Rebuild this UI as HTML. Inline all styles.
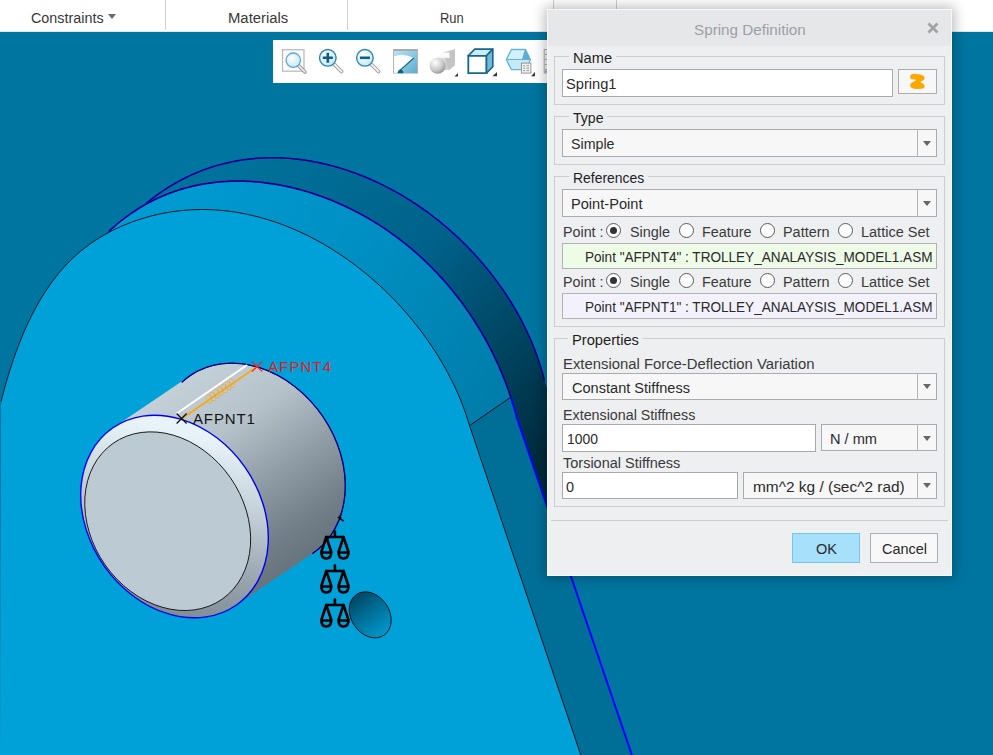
<!DOCTYPE html>
<html><head><meta charset="utf-8"><style>
html,body{margin:0;padding:0;width:993px;height:755px;overflow:hidden;background:#0075a0}
.b{position:absolute}
.t{position:absolute;white-space:nowrap;font-family:"Liberation Sans",sans-serif;transform-origin:0 0}
</style></head><body>
<svg width="993" height="755" viewBox="0 0 993 755" style="position:absolute;left:0;top:0">
<defs>
<linearGradient id="gBack" x1="260" y1="150" x2="560" y2="440" gradientUnits="userSpaceOnUse">
<stop offset="0" stop-color="#00719a"/><stop offset="0.45" stop-color="#00628a"/><stop offset="0.8" stop-color="#00405a"/><stop offset="1" stop-color="#002a3c"/></linearGradient>
<linearGradient id="gSide" x1="150" y1="190" x2="500" y2="420" gradientUnits="userSpaceOnUse">
<stop offset="0" stop-color="#009bd3"/><stop offset="0.5" stop-color="#008fc3"/><stop offset="1" stop-color="#007ca8"/></linearGradient>
<linearGradient id="gBody" x1="190.5" y1="375.4" x2="312.5" y2="553.6" gradientUnits="userSpaceOnUse">
<stop offset="0" stop-color="#c4d0d8"/><stop offset="0.3" stop-color="#b6c2ca"/><stop offset="0.6" stop-color="#909ca5"/><stop offset="0.85" stop-color="#737f88"/><stop offset="1" stop-color="#68747d"/></linearGradient>
<linearGradient id="gRim" x1="200" y1="405" x2="160" y2="625" gradientUnits="userSpaceOnUse"><stop offset="0" stop-color="#eaf6fb"/><stop offset="0.15" stop-color="#e6f2f8"/><stop offset="0.45" stop-color="#c2ced7"/><stop offset="0.75" stop-color="#97a3ac"/><stop offset="1" stop-color="#7c8891"/></linearGradient>
<linearGradient id="gHole" x1="358" y1="598" x2="384" y2="634" gradientUnits="userSpaceOnUse">
<stop offset="0" stop-color="#004c6a"/><stop offset="0.3" stop-color="#00668c"/><stop offset="0.7" stop-color="#0082b0"/><stop offset="1" stop-color="#0095c8"/></linearGradient>
</defs>
<rect width="993" height="755" fill="#0075a0"/>
<path d="M145.9,203.7 L148.1,201.9 L150.3,200.1 L152.6,198.4 L154.8,196.7 L157.0,195.0 L159.3,193.4 L161.6,191.9 L163.8,190.3 L166.1,188.8 L168.4,187.3 L170.7,185.9 L173.0,184.5 L175.3,183.2 L177.7,181.9 L180.0,180.6 L182.3,179.4 L184.7,178.2 L187.1,177.0 L189.4,175.9 L191.8,174.8 L194.2,173.7 L196.6,172.7 L199.0,171.7 L201.4,170.8 L203.8,169.8 L206.2,169.0 L208.7,168.1 L211.1,167.3 L213.5,166.5 L216.0,165.8 L218.4,165.1 L220.9,164.4 L223.3,163.8 L225.8,163.2 L228.3,162.6 L230.7,162.1 L233.2,161.5 L235.7,161.1 L238.2,160.6 L240.7,160.2 L243.1,159.8 L245.6,159.5 L248.1,159.2 L250.6,158.9 L253.1,158.7 L255.6,158.4 L258.1,158.2 L260.7,158.1 L263.2,158.0 L265.7,157.9 L268.2,157.8 L270.7,157.8 L273.2,157.8 L275.7,157.8 L278.2,157.8 L280.7,157.9 L283.3,158.0 L285.8,158.2 L288.3,158.3 L290.8,158.5 L293.3,158.8 L295.8,159.0 L298.3,159.3 L300.8,159.6 L303.3,159.9 L305.8,160.3 L308.3,160.7 L310.8,161.1 L313.3,161.6 L315.8,162.0 L318.3,162.5 L320.8,163.1 L323.3,163.6 L325.8,164.2 L328.2,164.8 L330.7,165.4 L333.2,166.1 L335.6,166.8 L338.1,167.5 L340.5,168.2 L343.0,169.0 L345.4,169.7 L347.9,170.5 L350.3,171.4 L352.7,172.2 L355.1,173.1 L357.5,174.0 L359.9,174.9 L362.3,175.9 L364.7,176.8 L367.1,177.8 L369.5,178.8 L371.9,179.9 L374.2,180.9 L376.6,182.0 L378.9,183.1 L381.2,184.2 L383.6,185.4 L385.9,186.6 L388.2,187.7 L390.5,189.0 L392.8,190.2 L395.1,191.4 L397.3,192.7 L399.6,194.0 L401.8,195.3 L404.1,196.6 L406.3,198.0 L408.5,199.4 L410.7,200.7 L412.9,202.2 L415.1,203.6 L417.3,205.0 L419.4,206.5 L421.6,208.0 L423.7,209.5 L425.9,211.0 L428.0,212.5 L430.1,214.1 L432.2,215.7 L434.2,217.3 L436.3,218.9 L438.4,220.5 L440.4,222.1 L442.4,223.8 L444.4,225.5 L446.4,227.2 L448.4,228.9 L450.4,230.6 L452.3,232.3 L454.3,234.1 L456.2,235.9 L458.1,237.6 L460.0,239.4 L461.9,241.3 L463.8,243.1 L465.6,244.9 L467.5,246.8 L469.3,248.7 L471.1,250.6 L472.9,252.5 L474.7,254.4 L476.4,256.3 L478.2,258.2 L479.9,260.2 L481.6,262.2 L483.3,264.2 L485.0,266.2 L486.7,268.2 L488.3,270.2 L489.9,272.2 L491.5,274.3 L493.1,276.3 L494.7,278.4 L496.3,280.5 L497.8,282.6 L499.3,284.7 L500.8,286.8 L502.3,288.9 L503.8,291.0 L505.2,293.2 L506.6,295.3 L508.0,297.5 L509.4,299.7 L510.8,301.8 L512.1,304.0 L513.5,306.2 L514.8,308.5 L516.1,310.7 L517.3,312.9 L518.6,315.1 L519.8,317.4 L521.0,319.7 L522.2,321.9 L523.3,324.2 L524.5,326.5 L525.6,328.8 L526.7,331.1 L527.8,333.4 L528.8,335.7 L529.9,338.0 L530.9,340.3 L531.9,342.6 L532.8,345.0 L533.8,347.3 L534.7,349.7 L535.6,352.0 L536.4,354.4 L537.3,356.7 L538.1,359.1 L538.9,361.5 L539.7,363.9 L540.4,366.3 L541.2,368.7 L541.9,371.0 L542.6,373.4 L543.2,375.9 L543.8,378.3 L544.4,380.7 L562,430 L580,500 L590,520 L559,540 L516.8,417.6 L516.4,415.9 L515.9,414.1 L515.5,412.4 L515.0,410.7 L514.5,409.0 L514.0,407.3 L513.5,405.6 L512.9,403.9 L512.4,402.2 L511.9,400.5 L511.3,398.8 L510.8,397.1 L510.2,395.4 L509.6,393.7 L509.1,392.0 L508.5,390.4 L507.9,388.7 L507.3,387.0 L506.6,385.3 L506.0,383.7 L505.4,382.0 L504.7,380.3 L504.1,378.7 L503.4,377.0 L502.7,375.4 L502.1,373.7 L501.4,372.1 L500.7,370.4 L500.0,368.8 L499.3,367.2 L498.5,365.5 L497.8,363.9 L497.1,362.3 L496.3,360.7 L495.6,359.1 L494.8,357.5 L494.0,355.9 L493.3,354.3 L492.5,352.7 L491.7,351.1 L490.9,349.5 L490.0,347.9 L489.2,346.3 L488.4,344.7 L487.6,343.2 L486.7,341.6 L485.9,340.0 L485.0,338.5 L484.1,336.9 L483.2,335.4 L482.3,333.9 L481.5,332.3 L480.5,330.8 L479.6,329.3 L478.7,327.7 L477.8,326.2 L476.8,324.7 L475.9,323.2 L474.9,321.7 L474.0,320.2 L473.0,318.7 L472.0,317.2 L471.1,315.7 L470.1,314.2 L469.1,312.8 L468.0,311.3 L467.0,309.9 L466.0,308.4 L465.0,306.9 L463.9,305.5 L462.9,304.1 L461.8,302.6 L460.8,301.2 L459.7,299.8 L458.6,298.4 L457.5,297.0 L456.4,295.6 L455.3,294.2 L454.2,292.8 L453.1,291.4 L452.0,290.0 L450.8,288.6 L449.7,287.3 L448.6,285.9 L447.4,284.5 L446.2,283.2 L445.1,281.9 L443.9,280.5 L442.7,279.2 L441.5,277.9 L440.3,276.6 L439.1,275.2 L437.9,273.9 L436.7,272.6 L435.4,271.4 L434.2,270.1 L433.0,268.8 L431.7,267.5 L430.5,266.3 L429.2,265.0 L427.9,263.8 L426.6,262.5 L425.4,261.3 L424.1,260.1 L422.8,258.9 L421.4,257.6 L420.1,256.4 L418.8,255.2 L417.5,254.0 L416.1,252.9 L414.8,251.7 L413.4,250.5 L412.1,249.4 L410.7,248.2 L409.4,247.1 L408.0,245.9 L406.6,244.8 L405.2,243.7 L403.8,242.6 L402.4,241.5 L401.0,240.4 L399.6,239.3 L398.1,238.2 L396.7,237.1 L395.3,236.1 L393.8,235.0 L392.4,234.0 L390.9,232.9 L389.4,231.9 L388.0,230.9 L386.5,229.8 L385.0,228.8 L383.5,227.8 L382.0,226.9 L380.5,225.9 L379.0,224.9 L377.5,223.9 L375.9,223.0 L374.4,222.0 L372.9,221.1 L371.3,220.2 L369.8,219.3 L368.2,218.3 L366.7,217.4 L365.1,216.6 L363.5,215.7 L362.0,214.8 L360.4,213.9 L358.8,213.1 L357.2,212.2 L355.6,211.4 L354.0,210.6 L352.4,209.8 L350.8,209.0 L349.1,208.2 L347.5,207.4 L345.9,206.6 L344.3,205.9 L342.6,205.1 L341.0,204.4 L339.3,203.6 L337.7,202.9 L336.0,202.2 L334.4,201.5 L332.7,200.8 L331.1,200.1 L329.4,199.4 L327.7,198.8 L326.0,198.1 L324.4,197.5 L322.7,196.9 L321.0,196.3 L319.3,195.7 L317.6,195.1 L315.9,194.5 L314.2,193.9 L312.5,193.4 L310.8,192.8 L309.1,192.3 L307.4,191.7 L305.7,191.2 L303.9,190.7 L302.2,190.2 L300.5,189.8 L298.8,189.3 L297.1,188.9 L295.3,188.4 L293.6,188.0 L291.9,187.6 L290.1,187.2 L288.4,186.8 L286.7,186.4 L284.9,186.0 L283.2,185.7 L281.4,185.3 L279.7,185.0 L278.0,184.7 L276.2,184.4 L274.5,184.1 L272.7,183.8 L271.0,183.6 L269.2,183.3 L267.5,183.1 L265.7,182.8 L264.0,182.6 L262.2,182.4 L260.5,182.2 L258.7,182.1 L257.0,181.9 L255.2,181.8 L253.4,181.6 L251.7,181.5 L249.9,181.4 L248.2,181.3 L246.4,181.3 L244.7,181.2 L242.9,181.1 L241.2,181.1 L239.4,181.1 L237.7,181.1 L235.9,181.1 L234.2,181.1 L232.4,181.2 L230.7,181.2 L228.9,181.3 L227.2,181.4 L225.5,181.5 L223.7,181.6 L222.0,181.7 L220.2,181.8 L218.5,182.0 L216.8,182.2 L215.0,182.4 L213.3,182.6 L211.6,182.8 L209.8,183.0 L208.1,183.3 L206.4,183.5 L204.7,183.8 L203.0,184.1 L201.2,184.4 L199.5,184.7 L197.8,185.1 L196.1,185.4 L194.4,185.8 L192.7,186.2 L191.0,186.6 L189.3,187.0 L187.6,187.5 L185.9,187.9 L184.2,188.4 L182.5,188.9 L180.9,189.4 L179.2,189.9 L177.5,190.5 L175.8,191.0 L174.2,191.6 L172.5,192.2 L170.9,192.8 L169.2,193.4 L167.5,194.0 L165.9,194.7 L164.3,195.4 L162.6,196.0 L161.0,196.8 L159.4,197.5 L157.7,198.2 L156.1,199.0 L154.5,199.8 L152.9,200.6 L151.3,201.4 L149.7,202.2 L148.1,203.0 L146.5,203.9 L144.9,204.8 L143.4,205.7 L141.8,206.6 L140.2,207.6 L138.7,208.5 L137.1,209.5 L135.6,210.5 L134.0,211.5 L132.5,212.5 L130.9,213.6 L129.4,214.6 L127.9,215.7 L126.4,216.8 L124.9,217.9 L123.4,219.1 L121.9,220.2 L120.4,221.4 L118.9,222.6 L117.4,223.8 L116.0,225.1 L114.5,226.3 L113.1,227.6 L111.6,228.9 L110.2,230.2 L108.8,231.6 Z" fill="url(#gBack)"/>
<path d="M108.8,231.6 L110.2,230.2 L111.6,228.9 L113.1,227.6 L114.5,226.3 L116.0,225.1 L117.4,223.8 L118.9,222.6 L120.4,221.4 L121.9,220.2 L123.4,219.1 L124.9,217.9 L126.4,216.8 L127.9,215.7 L129.4,214.6 L130.9,213.6 L132.5,212.5 L134.0,211.5 L135.6,210.5 L137.1,209.5 L138.7,208.5 L140.2,207.6 L141.8,206.6 L143.4,205.7 L144.9,204.8 L146.5,203.9 L148.1,203.0 L149.7,202.2 L151.3,201.4 L152.9,200.6 L154.5,199.8 L156.1,199.0 L157.7,198.2 L159.4,197.5 L161.0,196.8 L162.6,196.0 L164.3,195.4 L165.9,194.7 L167.5,194.0 L169.2,193.4 L170.9,192.8 L172.5,192.2 L174.2,191.6 L175.8,191.0 L177.5,190.5 L179.2,189.9 L180.9,189.4 L182.5,188.9 L184.2,188.4 L185.9,187.9 L187.6,187.5 L189.3,187.0 L191.0,186.6 L192.7,186.2 L194.4,185.8 L196.1,185.4 L197.8,185.1 L199.5,184.7 L201.2,184.4 L203.0,184.1 L204.7,183.8 L206.4,183.5 L208.1,183.3 L209.8,183.0 L211.6,182.8 L213.3,182.6 L215.0,182.4 L216.8,182.2 L218.5,182.0 L220.2,181.8 L222.0,181.7 L223.7,181.6 L225.5,181.5 L227.2,181.4 L228.9,181.3 L230.7,181.2 L232.4,181.2 L234.2,181.1 L235.9,181.1 L237.7,181.1 L239.4,181.1 L241.2,181.1 L242.9,181.1 L244.7,181.2 L246.4,181.3 L248.2,181.3 L249.9,181.4 L251.7,181.5 L253.4,181.6 L255.2,181.8 L257.0,181.9 L258.7,182.1 L260.5,182.2 L262.2,182.4 L264.0,182.6 L265.7,182.8 L267.5,183.1 L269.2,183.3 L271.0,183.6 L272.7,183.8 L274.5,184.1 L276.2,184.4 L278.0,184.7 L279.7,185.0 L281.4,185.3 L283.2,185.7 L284.9,186.0 L286.7,186.4 L288.4,186.8 L290.1,187.2 L291.9,187.6 L293.6,188.0 L295.3,188.4 L297.1,188.9 L298.8,189.3 L300.5,189.8 L302.2,190.2 L303.9,190.7 L305.7,191.2 L307.4,191.7 L309.1,192.3 L310.8,192.8 L312.5,193.4 L314.2,193.9 L315.9,194.5 L317.6,195.1 L319.3,195.7 L321.0,196.3 L322.7,196.9 L324.4,197.5 L326.0,198.1 L327.7,198.8 L329.4,199.4 L331.1,200.1 L332.7,200.8 L334.4,201.5 L336.0,202.2 L337.7,202.9 L339.3,203.6 L341.0,204.4 L342.6,205.1 L344.3,205.9 L345.9,206.6 L347.5,207.4 L349.1,208.2 L350.8,209.0 L352.4,209.8 L354.0,210.6 L355.6,211.4 L357.2,212.2 L358.8,213.1 L360.4,213.9 L362.0,214.8 L363.5,215.7 L365.1,216.6 L366.7,217.4 L368.2,218.3 L369.8,219.3 L371.3,220.2 L372.9,221.1 L374.4,222.0 L375.9,223.0 L377.5,223.9 L379.0,224.9 L380.5,225.9 L382.0,226.9 L383.5,227.8 L385.0,228.8 L386.5,229.8 L388.0,230.9 L389.4,231.9 L390.9,232.9 L392.4,234.0 L393.8,235.0 L395.3,236.1 L396.7,237.1 L398.1,238.2 L399.6,239.3 L401.0,240.4 L402.4,241.5 L403.8,242.6 L405.2,243.7 L406.6,244.8 L408.0,245.9 L409.4,247.1 L410.7,248.2 L412.1,249.4 L413.4,250.5 L414.8,251.7 L416.1,252.9 L417.5,254.0 L418.8,255.2 L420.1,256.4 L421.4,257.6 L422.8,258.9 L424.1,260.1 L425.4,261.3 L426.6,262.5 L427.9,263.8 L429.2,265.0 L430.5,266.3 L431.7,267.5 L433.0,268.8 L434.2,270.1 L435.4,271.4 L436.7,272.6 L437.9,273.9 L439.1,275.2 L440.3,276.6 L441.5,277.9 L442.7,279.2 L443.9,280.5 L445.1,281.9 L446.2,283.2 L447.4,284.5 L448.6,285.9 L449.7,287.3 L450.8,288.6 L452.0,290.0 L453.1,291.4 L454.2,292.8 L455.3,294.2 L456.4,295.6 L457.5,297.0 L458.6,298.4 L459.7,299.8 L460.8,301.2 L461.8,302.6 L462.9,304.1 L463.9,305.5 L465.0,306.9 L466.0,308.4 L467.0,309.9 L468.0,311.3 L469.1,312.8 L470.1,314.2 L471.1,315.7 L472.0,317.2 L473.0,318.7 L474.0,320.2 L474.9,321.7 L475.9,323.2 L476.8,324.7 L477.8,326.2 L478.7,327.7 L479.6,329.3 L480.5,330.8 L481.5,332.3 L482.3,333.9 L483.2,335.4 L484.1,336.9 L485.0,338.5 L485.9,340.0 L486.7,341.6 L487.6,343.2 L488.4,344.7 L489.2,346.3 L490.0,347.9 L490.9,349.5 L491.7,351.1 L492.5,352.7 L493.3,354.3 L494.0,355.9 L494.8,357.5 L495.6,359.1 L496.3,360.7 L497.1,362.3 L497.8,363.9 L498.5,365.5 L499.3,367.2 L500.0,368.8 L500.7,370.4 L501.4,372.1 L502.1,373.7 L502.7,375.4 L503.4,377.0 L504.1,378.7 L504.7,380.3 L505.4,382.0 L506.0,383.7 L506.6,385.3 L507.3,387.0 L507.9,388.7 L508.5,390.4 L509.1,392.0 L509.6,393.7 L510.2,395.4 L510.8,397.1 L511.3,398.8 L511.9,400.5 L512.4,402.2 L512.9,403.9 L513.5,405.6 L514.0,407.3 L514.5,409.0 L515.0,410.7 L515.5,412.4 L515.9,414.1 L516.4,415.9 L516.8,417.6 L631.9,755.0 L580.8,755.0 L469.1,424.2 L468.5,422.2 L467.9,420.2 L467.2,418.2 L466.6,416.1 L465.9,414.1 L465.2,412.1 L464.5,410.1 L463.7,408.1 L463.0,406.1 L462.2,404.1 L461.4,402.1 L460.6,400.1 L459.8,398.1 L458.9,396.1 L458.1,394.1 L457.2,392.1 L456.3,390.2 L455.4,388.2 L454.5,386.2 L453.6,384.2 L452.6,382.3 L451.6,380.3 L450.6,378.4 L449.6,376.4 L448.6,374.4 L447.6,372.5 L446.5,370.6 L445.5,368.6 L444.4,366.7 L443.3,364.8 L442.2,362.8 L441.0,360.9 L439.9,359.0 L438.7,357.1 L437.6,355.2 L436.4,353.3 L435.2,351.4 L434.0,349.6 L432.7,347.7 L431.5,345.8 L430.2,344.0 L428.9,342.1 L427.7,340.3 L426.4,338.4 L425.0,336.6 L423.7,334.8 L422.4,332.9 L421.0,331.1 L419.6,329.3 L418.3,327.5 L416.9,325.7 L415.5,324.0 L414.0,322.2 L412.6,320.4 L411.2,318.7 L409.7,316.9 L408.2,315.2 L406.7,313.5 L405.3,311.7 L403.7,310.0 L402.2,308.3 L400.7,306.6 L399.1,305.0 L397.6,303.3 L396.0,301.6 L394.4,300.0 L392.9,298.3 L391.2,296.7 L389.6,295.1 L388.0,293.5 L386.4,291.9 L384.7,290.3 L383.1,288.7 L381.4,287.2 L379.7,285.6 L378.0,284.1 L376.3,282.5 L374.6,281.0 L372.9,279.5 L371.2,278.0 L369.4,276.5 L367.7,275.1 L365.9,273.6 L364.2,272.2 L362.4,270.7 L360.6,269.3 L358.8,267.9 L357.0,266.5 L355.2,265.1 L353.3,263.8 L351.5,262.4 L349.7,261.1 L347.8,259.7 L346.0,258.4 L344.1,257.1 L342.2,255.8 L340.3,254.6 L338.4,253.3 L336.5,252.1 L334.6,250.8 L332.7,249.6 L330.8,248.4 L328.8,247.3 L326.9,246.1 L324.9,244.9 L323.0,243.8 L321.0,242.7 L319.0,241.6 L317.1,240.5 L315.1,239.4 L313.1,238.4 L311.1,237.3 L309.1,236.3 L307.1,235.3 L305.1,234.3 L303.0,233.4 L301.0,232.4 L299.0,231.5 L296.9,230.6 L294.9,229.7 L292.8,228.8 L290.7,227.9 L288.7,227.1 L286.6,226.2 L284.5,225.4 L282.4,224.6 L280.4,223.9 L278.3,223.1 L276.2,222.4 L274.1,221.7 L271.9,221.0 L269.8,220.3 L267.7,219.6 L265.6,219.0 L263.5,218.4 L261.3,217.8 L259.2,217.2 L257.1,216.6 L254.9,216.1 L252.8,215.6 L250.6,215.1 L248.5,214.6 L246.3,214.1 L244.1,213.7 L242.0,213.3 L239.8,212.9 L237.6,212.5 L235.5,212.1 L233.3,211.8 L231.1,211.5 L228.9,211.2 L226.7,210.9 L224.5,210.7 L222.3,210.5 L220.1,210.3 L218.0,210.1 L215.8,210.0 L213.6,209.8 L211.3,209.7 L209.1,209.6 L206.9,209.6 L204.7,209.5 L202.5,209.5 L200.3,209.5 L198.1,209.6 L195.9,209.6 L193.7,209.7 L191.5,209.8 L189.2,209.9 L187.0,210.1 L184.8,210.3 L182.6,210.5 L180.4,210.7 L178.2,211.0 L175.9,211.2 L173.7,211.5 L171.5,211.8 L169.3,212.2 L167.1,212.6 L164.9,213.0 L162.7,213.4 L160.5,213.8 L158.3,214.3 L156.2,214.8 L154.0,215.3 L151.8,215.8 L149.6,216.4 L147.5,217.0 L145.3,217.6 L143.2,218.3 L141.1,218.9 L138.9,219.6 L136.8,220.3 L134.7,221.0 L132.6,221.8 L130.5,222.6 L128.4,223.4 L126.3,224.2 L124.3,225.1 L122.2,225.9 L120.2,226.8 L118.1,227.8 L116.1,228.7 L114.1,229.7 L112.1,230.7 L110.2,231.7 L108.2,232.8 L106.2,233.8 L104.3,234.9 L102.4,236.0 L100.5,237.2 L98.6,238.3 L96.7,239.5 L94.8,240.7 L93.0,242.0 L91.2,243.2 L89.4,244.5 L87.6,245.8 L85.8,247.2 L84.0,248.5 L82.3,249.9 L80.6,251.3 L78.9,252.7 L77.2,254.2 L75.6,255.6 L73.9,257.1 L72.3,258.7 L70.7,260.2 L69.1,261.8 L67.6,263.4 L66.0,265.0 L64.5,266.6 L63.0,268.3 L61.6,269.9 L60.1,271.6 L58.7,273.3 L57.3,275.1 L55.9,276.8 L54.5,278.6 L53.2,280.4 L51.8,282.2 L50.5,284.0 L49.2,285.9 L47.9,287.7 L46.7,289.6 L45.4,291.5 L44.2,293.4 L43.0,295.3 L41.8,297.2 L40.6,299.2 L39.5,301.1 L38.3,303.1 L37.2,305.1 L36.1,307.1 L35.0,309.1 L33.9,311.1 L32.9,313.1 L31.8,315.2 L30.8,317.2 L29.8,319.3 L28.8,321.3 L27.8,323.4 L26.9,325.5 L25.9,327.6 L25.0,329.6 L24.1,331.7 L23.2,333.8 L22.3,336.0 L21.4,338.1 L20.6,340.2 L19.7,342.3 L18.9,344.4 L18.1,346.6 L17.3,348.7 L16.5,350.8 L15.7,353.0 L14.9,355.1 L14.2,357.2 L13.4,359.4 L12.7,361.5 L12.0,363.7 L11.3,365.8 L10.6,367.9 L9.9,370.1 L9.3,372.2 L8.6,374.3 L8.0,376.4 L7.3,378.6 L6.7,380.7 L6.1,382.8 L5.5,384.9 L4.9,387.0 L4.3,389.1 L3.8,391.2 L3.2,393.3 L2.7,395.3 L2.1,397.4 L1.6,399.5 L1.1,401.5 Z" fill="url(#gSide)"/>
<path d="M470.5,425 L510.6,397.6 L510.8,397.1 L511.3,398.8 L511.9,400.5 L512.4,402.2 L512.9,403.9 L513.5,405.6 L514.0,407.3 L514.5,409.0 L515.0,410.7 L515.5,412.4 L515.9,414.1 L516.4,415.9 L516.8,417.6 L631.9,755.0 L580.8,755 Z" fill="#006f98"/>
<path d="M1.1,401.5 L1.6,399.5 L2.1,397.4 L2.7,395.3 L3.2,393.3 L3.8,391.2 L4.3,389.1 L4.9,387.0 L5.5,384.9 L6.1,382.8 L6.7,380.7 L7.3,378.6 L8.0,376.4 L8.6,374.3 L9.3,372.2 L9.9,370.1 L10.6,367.9 L11.3,365.8 L12.0,363.7 L12.7,361.5 L13.4,359.4 L14.2,357.2 L14.9,355.1 L15.7,353.0 L16.5,350.8 L17.3,348.7 L18.1,346.6 L18.9,344.4 L19.7,342.3 L20.6,340.2 L21.4,338.1 L22.3,336.0 L23.2,333.8 L24.1,331.7 L25.0,329.6 L25.9,327.6 L26.9,325.5 L27.8,323.4 L28.8,321.3 L29.8,319.3 L30.8,317.2 L31.8,315.2 L32.9,313.1 L33.9,311.1 L35.0,309.1 L36.1,307.1 L37.2,305.1 L38.3,303.1 L39.5,301.1 L40.6,299.2 L41.8,297.2 L43.0,295.3 L44.2,293.4 L45.4,291.5 L46.7,289.6 L47.9,287.7 L49.2,285.9 L50.5,284.0 L51.8,282.2 L53.2,280.4 L54.5,278.6 L55.9,276.8 L57.3,275.1 L58.7,273.3 L60.1,271.6 L61.6,269.9 L63.0,268.3 L64.5,266.6 L66.0,265.0 L67.6,263.4 L69.1,261.8 L70.7,260.2 L72.3,258.7 L73.9,257.1 L75.6,255.6 L77.2,254.2 L78.9,252.7 L80.6,251.3 L82.3,249.9 L84.0,248.5 L85.8,247.2 L87.6,245.8 L89.4,244.5 L91.2,243.2 L93.0,242.0 L94.8,240.7 L96.7,239.5 L98.6,238.3 L100.5,237.2 L102.4,236.0 L104.3,234.9 L106.2,233.8 L108.2,232.8 L110.2,231.7 L112.1,230.7 L114.1,229.7 L116.1,228.7 L118.1,227.8 L120.2,226.8 L122.2,225.9 L124.3,225.1 L126.3,224.2 L128.4,223.4 L130.5,222.6 L132.6,221.8 L134.7,221.0 L136.8,220.3 L138.9,219.6 L141.1,218.9 L143.2,218.3 L145.3,217.6 L147.5,217.0 L149.6,216.4 L151.8,215.8 L154.0,215.3 L156.2,214.8 L158.3,214.3 L160.5,213.8 L162.7,213.4 L164.9,213.0 L167.1,212.6 L169.3,212.2 L171.5,211.8 L173.7,211.5 L175.9,211.2 L178.2,211.0 L180.4,210.7 L182.6,210.5 L184.8,210.3 L187.0,210.1 L189.2,209.9 L191.5,209.8 L193.7,209.7 L195.9,209.6 L198.1,209.6 L200.3,209.5 L202.5,209.5 L204.7,209.5 L206.9,209.6 L209.1,209.6 L211.3,209.7 L213.6,209.8 L215.8,210.0 L218.0,210.1 L220.1,210.3 L222.3,210.5 L224.5,210.7 L226.7,210.9 L228.9,211.2 L231.1,211.5 L233.3,211.8 L235.5,212.1 L237.6,212.5 L239.8,212.9 L242.0,213.3 L244.1,213.7 L246.3,214.1 L248.5,214.6 L250.6,215.1 L252.8,215.6 L254.9,216.1 L257.1,216.6 L259.2,217.2 L261.3,217.8 L263.5,218.4 L265.6,219.0 L267.7,219.6 L269.8,220.3 L271.9,221.0 L274.1,221.7 L276.2,222.4 L278.3,223.1 L280.4,223.9 L282.4,224.6 L284.5,225.4 L286.6,226.2 L288.7,227.1 L290.7,227.9 L292.8,228.8 L294.9,229.7 L296.9,230.6 L299.0,231.5 L301.0,232.4 L303.0,233.4 L305.1,234.3 L307.1,235.3 L309.1,236.3 L311.1,237.3 L313.1,238.4 L315.1,239.4 L317.1,240.5 L319.0,241.6 L321.0,242.7 L323.0,243.8 L324.9,244.9 L326.9,246.1 L328.8,247.3 L330.8,248.4 L332.7,249.6 L334.6,250.8 L336.5,252.1 L338.4,253.3 L340.3,254.6 L342.2,255.8 L344.1,257.1 L346.0,258.4 L347.8,259.7 L349.7,261.1 L351.5,262.4 L353.3,263.8 L355.2,265.1 L357.0,266.5 L358.8,267.9 L360.6,269.3 L362.4,270.7 L364.2,272.2 L365.9,273.6 L367.7,275.1 L369.4,276.5 L371.2,278.0 L372.9,279.5 L374.6,281.0 L376.3,282.5 L378.0,284.1 L379.7,285.6 L381.4,287.2 L383.1,288.7 L384.7,290.3 L386.4,291.9 L388.0,293.5 L389.6,295.1 L391.2,296.7 L392.9,298.3 L394.4,300.0 L396.0,301.6 L397.6,303.3 L399.1,305.0 L400.7,306.6 L402.2,308.3 L403.7,310.0 L405.3,311.7 L406.7,313.5 L408.2,315.2 L409.7,316.9 L411.2,318.7 L412.6,320.4 L414.0,322.2 L415.5,324.0 L416.9,325.7 L418.3,327.5 L419.6,329.3 L421.0,331.1 L422.4,332.9 L423.7,334.8 L425.0,336.6 L426.4,338.4 L427.7,340.3 L428.9,342.1 L430.2,344.0 L431.5,345.8 L432.7,347.7 L434.0,349.6 L435.2,351.4 L436.4,353.3 L437.6,355.2 L438.7,357.1 L439.9,359.0 L441.0,360.9 L442.2,362.8 L443.3,364.8 L444.4,366.7 L445.5,368.6 L446.5,370.6 L447.6,372.5 L448.6,374.4 L449.6,376.4 L450.6,378.4 L451.6,380.3 L452.6,382.3 L453.6,384.2 L454.5,386.2 L455.4,388.2 L456.3,390.2 L457.2,392.1 L458.1,394.1 L458.9,396.1 L459.8,398.1 L460.6,400.1 L461.4,402.1 L462.2,404.1 L463.0,406.1 L463.7,408.1 L464.5,410.1 L465.2,412.1 L465.9,414.1 L466.6,416.1 L467.2,418.2 L467.9,420.2 L468.5,422.2 L469.1,424.2 L580.8,755.0 L0,755 Z" fill="#00a0d8"/>
<path d="M145.9,203.7 L148.1,201.9 L150.3,200.1 L152.6,198.4 L154.8,196.7 L157.0,195.0 L159.3,193.4 L161.6,191.9 L163.8,190.3 L166.1,188.8 L168.4,187.3 L170.7,185.9 L173.0,184.5 L175.3,183.2 L177.7,181.9 L180.0,180.6 L182.3,179.4 L184.7,178.2 L187.1,177.0 L189.4,175.9 L191.8,174.8 L194.2,173.7 L196.6,172.7 L199.0,171.7 L201.4,170.8 L203.8,169.8 L206.2,169.0 L208.7,168.1 L211.1,167.3 L213.5,166.5 L216.0,165.8 L218.4,165.1 L220.9,164.4 L223.3,163.8 L225.8,163.2 L228.3,162.6 L230.7,162.1 L233.2,161.5 L235.7,161.1 L238.2,160.6 L240.7,160.2 L243.1,159.8 L245.6,159.5 L248.1,159.2 L250.6,158.9 L253.1,158.7 L255.6,158.4 L258.1,158.2 L260.7,158.1 L263.2,158.0 L265.7,157.9 L268.2,157.8 L270.7,157.8 L273.2,157.8 L275.7,157.8 L278.2,157.8 L280.7,157.9 L283.3,158.0 L285.8,158.2 L288.3,158.3 L290.8,158.5 L293.3,158.8 L295.8,159.0 L298.3,159.3 L300.8,159.6 L303.3,159.9 L305.8,160.3 L308.3,160.7 L310.8,161.1 L313.3,161.6 L315.8,162.0 L318.3,162.5 L320.8,163.1 L323.3,163.6 L325.8,164.2 L328.2,164.8 L330.7,165.4 L333.2,166.1 L335.6,166.8 L338.1,167.5 L340.5,168.2 L343.0,169.0 L345.4,169.7 L347.9,170.5 L350.3,171.4 L352.7,172.2 L355.1,173.1 L357.5,174.0 L359.9,174.9 L362.3,175.9 L364.7,176.8 L367.1,177.8 L369.5,178.8 L371.9,179.9 L374.2,180.9 L376.6,182.0 L378.9,183.1 L381.2,184.2 L383.6,185.4 L385.9,186.6 L388.2,187.7 L390.5,189.0 L392.8,190.2 L395.1,191.4 L397.3,192.7 L399.6,194.0 L401.8,195.3 L404.1,196.6 L406.3,198.0 L408.5,199.4 L410.7,200.7 L412.9,202.2 L415.1,203.6 L417.3,205.0 L419.4,206.5 L421.6,208.0 L423.7,209.5 L425.9,211.0 L428.0,212.5 L430.1,214.1 L432.2,215.7 L434.2,217.3 L436.3,218.9 L438.4,220.5 L440.4,222.1 L442.4,223.8 L444.4,225.5 L446.4,227.2 L448.4,228.9 L450.4,230.6 L452.3,232.3 L454.3,234.1 L456.2,235.9 L458.1,237.6 L460.0,239.4 L461.9,241.3 L463.8,243.1 L465.6,244.9 L467.5,246.8 L469.3,248.7 L471.1,250.6 L472.9,252.5 L474.7,254.4 L476.4,256.3 L478.2,258.2 L479.9,260.2 L481.6,262.2 L483.3,264.2 L485.0,266.2 L486.7,268.2 L488.3,270.2 L489.9,272.2 L491.5,274.3 L493.1,276.3 L494.7,278.4 L496.3,280.5 L497.8,282.6 L499.3,284.7 L500.8,286.8 L502.3,288.9 L503.8,291.0 L505.2,293.2 L506.6,295.3 L508.0,297.5 L509.4,299.7 L510.8,301.8 L512.1,304.0 L513.5,306.2 L514.8,308.5 L516.1,310.7 L517.3,312.9 L518.6,315.1 L519.8,317.4 L521.0,319.7 L522.2,321.9 L523.3,324.2 L524.5,326.5 L525.6,328.8 L526.7,331.1 L527.8,333.4 L528.8,335.7 L529.9,338.0 L530.9,340.3 L531.9,342.6 L532.8,345.0 L533.8,347.3 L534.7,349.7 L535.6,352.0 L536.4,354.4 L537.3,356.7 L538.1,359.1 L538.9,361.5 L539.7,363.9 L540.4,366.3 L541.2,368.7 L541.9,371.0 L542.6,373.4 L543.2,375.9 L543.8,378.3 L544.4,380.7" fill="none" stroke="#0000e8" stroke-width="1.6"/>
<path d="M145.9,203.7 L148.1,201.9 L150.3,200.1 L152.6,198.4 L154.8,196.7 L157.0,195.0 L159.3,193.4 L161.6,191.9 L163.8,190.3 L166.1,188.8 L168.4,187.3 L170.7,185.9 L173.0,184.5 L175.3,183.2 L177.7,181.9 L180.0,180.6 L182.3,179.4 L184.7,178.2 L187.1,177.0 L189.4,175.9 L191.8,174.8 L194.2,173.7 L196.6,172.7 L199.0,171.7 L201.4,170.8 L203.8,169.8 L206.2,169.0 L208.7,168.1 L211.1,167.3 L213.5,166.5 L216.0,165.8 L218.4,165.1 L220.9,164.4 L223.3,163.8 L225.8,163.2 L228.3,162.6 L230.7,162.1 L233.2,161.5 L235.7,161.1 L238.2,160.6 L240.7,160.2 L243.1,159.8 L245.6,159.5 L248.1,159.2 L250.6,158.9 L253.1,158.7 L255.6,158.4 L258.1,158.2 L260.7,158.1 L263.2,158.0 L265.7,157.9 L268.2,157.8 L270.7,157.8 L273.2,157.8 L275.7,157.8 L278.2,157.8 L280.7,157.9 L283.3,158.0 L285.8,158.2 L288.3,158.3 L290.8,158.5 L293.3,158.8 L295.8,159.0 L298.3,159.3 L300.8,159.6 L303.3,159.9 L305.8,160.3 L308.3,160.7 L310.8,161.1 L313.3,161.6 L315.8,162.0 L318.3,162.5 L320.8,163.1 L323.3,163.6 L325.8,164.2 L328.2,164.8 L330.7,165.4 L333.2,166.1 L335.6,166.8 L338.1,167.5 L340.5,168.2 L343.0,169.0 L345.4,169.7 L347.9,170.5 L350.3,171.4 L352.7,172.2 L355.1,173.1 L357.5,174.0 L359.9,174.9 L362.3,175.9 L364.7,176.8 L367.1,177.8 L369.5,178.8 L371.9,179.9 L374.2,180.9 L376.6,182.0 L378.9,183.1 L381.2,184.2 L383.6,185.4 L385.9,186.6 L388.2,187.7 L390.5,189.0 L392.8,190.2 L395.1,191.4 L397.3,192.7 L399.6,194.0 L401.8,195.3 L404.1,196.6 L406.3,198.0 L408.5,199.4 L410.7,200.7 L412.9,202.2 L415.1,203.6 L417.3,205.0 L419.4,206.5 L421.6,208.0 L423.7,209.5 L425.9,211.0 L428.0,212.5 L430.1,214.1 L432.2,215.7 L434.2,217.3 L436.3,218.9 L438.4,220.5 L440.4,222.1 L442.4,223.8 L444.4,225.5 L446.4,227.2 L448.4,228.9 L450.4,230.6 L452.3,232.3 L454.3,234.1 L456.2,235.9 L458.1,237.6 L460.0,239.4 L461.9,241.3 L463.8,243.1 L465.6,244.9 L467.5,246.8 L469.3,248.7 L471.1,250.6 L472.9,252.5 L474.7,254.4 L476.4,256.3 L478.2,258.2 L479.9,260.2 L481.6,262.2 L483.3,264.2 L485.0,266.2 L486.7,268.2 L488.3,270.2 L489.9,272.2 L491.5,274.3 L493.1,276.3 L494.7,278.4 L496.3,280.5 L497.8,282.6 L499.3,284.7 L500.8,286.8 L502.3,288.9 L503.8,291.0 L505.2,293.2 L506.6,295.3 L508.0,297.5 L509.4,299.7 L510.8,301.8 L512.1,304.0 L513.5,306.2 L514.8,308.5 L516.1,310.7 L517.3,312.9 L518.6,315.1 L519.8,317.4 L521.0,319.7 L522.2,321.9 L523.3,324.2 L524.5,326.5 L525.6,328.8 L526.7,331.1 L527.8,333.4 L528.8,335.7 L529.9,338.0 L530.9,340.3 L531.9,342.6 L532.8,345.0 L533.8,347.3 L534.7,349.7 L535.6,352.0 L536.4,354.4 L537.3,356.7 L538.1,359.1 L538.9,361.5 L539.7,363.9 L540.4,366.3 L541.2,368.7 L541.9,371.0 L542.6,373.4 L543.2,375.9 L543.8,378.3 L544.4,380.7" fill="none" stroke="#000018" stroke-width="0.7"/>
<path d="M108.8,231.6 L110.2,230.2 L111.6,228.9 L113.1,227.6 L114.5,226.3 L116.0,225.1 L117.4,223.8 L118.9,222.6 L120.4,221.4 L121.9,220.2 L123.4,219.1 L124.9,217.9 L126.4,216.8 L127.9,215.7 L129.4,214.6 L130.9,213.6 L132.5,212.5 L134.0,211.5 L135.6,210.5 L137.1,209.5 L138.7,208.5 L140.2,207.6 L141.8,206.6 L143.4,205.7 L144.9,204.8 L146.5,203.9 L148.1,203.0 L149.7,202.2 L151.3,201.4 L152.9,200.6 L154.5,199.8 L156.1,199.0 L157.7,198.2 L159.4,197.5 L161.0,196.8 L162.6,196.0 L164.3,195.4 L165.9,194.7 L167.5,194.0 L169.2,193.4 L170.9,192.8 L172.5,192.2 L174.2,191.6 L175.8,191.0 L177.5,190.5 L179.2,189.9 L180.9,189.4 L182.5,188.9 L184.2,188.4 L185.9,187.9 L187.6,187.5 L189.3,187.0 L191.0,186.6 L192.7,186.2 L194.4,185.8 L196.1,185.4 L197.8,185.1 L199.5,184.7 L201.2,184.4 L203.0,184.1 L204.7,183.8 L206.4,183.5 L208.1,183.3 L209.8,183.0 L211.6,182.8 L213.3,182.6 L215.0,182.4 L216.8,182.2 L218.5,182.0 L220.2,181.8 L222.0,181.7 L223.7,181.6 L225.5,181.5 L227.2,181.4 L228.9,181.3 L230.7,181.2 L232.4,181.2 L234.2,181.1 L235.9,181.1 L237.7,181.1 L239.4,181.1 L241.2,181.1 L242.9,181.1 L244.7,181.2 L246.4,181.3 L248.2,181.3 L249.9,181.4 L251.7,181.5 L253.4,181.6 L255.2,181.8 L257.0,181.9 L258.7,182.1 L260.5,182.2 L262.2,182.4 L264.0,182.6 L265.7,182.8 L267.5,183.1 L269.2,183.3 L271.0,183.6 L272.7,183.8 L274.5,184.1 L276.2,184.4 L278.0,184.7 L279.7,185.0 L281.4,185.3 L283.2,185.7 L284.9,186.0 L286.7,186.4 L288.4,186.8 L290.1,187.2 L291.9,187.6 L293.6,188.0 L295.3,188.4 L297.1,188.9 L298.8,189.3 L300.5,189.8 L302.2,190.2 L303.9,190.7 L305.7,191.2 L307.4,191.7 L309.1,192.3 L310.8,192.8 L312.5,193.4 L314.2,193.9 L315.9,194.5 L317.6,195.1 L319.3,195.7 L321.0,196.3 L322.7,196.9 L324.4,197.5 L326.0,198.1 L327.7,198.8 L329.4,199.4 L331.1,200.1 L332.7,200.8 L334.4,201.5 L336.0,202.2 L337.7,202.9 L339.3,203.6 L341.0,204.4 L342.6,205.1 L344.3,205.9 L345.9,206.6 L347.5,207.4 L349.1,208.2 L350.8,209.0 L352.4,209.8 L354.0,210.6 L355.6,211.4 L357.2,212.2 L358.8,213.1 L360.4,213.9 L362.0,214.8 L363.5,215.7 L365.1,216.6 L366.7,217.4 L368.2,218.3 L369.8,219.3 L371.3,220.2 L372.9,221.1 L374.4,222.0 L375.9,223.0 L377.5,223.9 L379.0,224.9 L380.5,225.9 L382.0,226.9 L383.5,227.8 L385.0,228.8 L386.5,229.8 L388.0,230.9 L389.4,231.9 L390.9,232.9 L392.4,234.0 L393.8,235.0 L395.3,236.1 L396.7,237.1 L398.1,238.2 L399.6,239.3 L401.0,240.4 L402.4,241.5 L403.8,242.6 L405.2,243.7 L406.6,244.8 L408.0,245.9 L409.4,247.1 L410.7,248.2 L412.1,249.4 L413.4,250.5 L414.8,251.7 L416.1,252.9 L417.5,254.0 L418.8,255.2 L420.1,256.4 L421.4,257.6 L422.8,258.9 L424.1,260.1 L425.4,261.3 L426.6,262.5 L427.9,263.8 L429.2,265.0 L430.5,266.3 L431.7,267.5 L433.0,268.8 L434.2,270.1 L435.4,271.4 L436.7,272.6 L437.9,273.9 L439.1,275.2 L440.3,276.6 L441.5,277.9 L442.7,279.2 L443.9,280.5 L445.1,281.9 L446.2,283.2 L447.4,284.5 L448.6,285.9 L449.7,287.3 L450.8,288.6 L452.0,290.0 L453.1,291.4 L454.2,292.8 L455.3,294.2 L456.4,295.6 L457.5,297.0 L458.6,298.4 L459.7,299.8 L460.8,301.2 L461.8,302.6 L462.9,304.1 L463.9,305.5 L465.0,306.9 L466.0,308.4 L467.0,309.9 L468.0,311.3 L469.1,312.8 L470.1,314.2 L471.1,315.7 L472.0,317.2 L473.0,318.7 L474.0,320.2 L474.9,321.7 L475.9,323.2 L476.8,324.7 L477.8,326.2 L478.7,327.7 L479.6,329.3 L480.5,330.8 L481.5,332.3 L482.3,333.9 L483.2,335.4 L484.1,336.9 L485.0,338.5 L485.9,340.0 L486.7,341.6 L487.6,343.2 L488.4,344.7 L489.2,346.3 L490.0,347.9 L490.9,349.5 L491.7,351.1 L492.5,352.7 L493.3,354.3 L494.0,355.9 L494.8,357.5 L495.6,359.1 L496.3,360.7 L497.1,362.3 L497.8,363.9 L498.5,365.5 L499.3,367.2 L500.0,368.8 L500.7,370.4 L501.4,372.1 L502.1,373.7 L502.7,375.4 L503.4,377.0 L504.1,378.7 L504.7,380.3 L505.4,382.0 L506.0,383.7 L506.6,385.3 L507.3,387.0 L507.9,388.7 L508.5,390.4 L509.1,392.0 L509.6,393.7 L510.2,395.4 L510.8,397.1" fill="none" stroke="#0000e8" stroke-width="1.7"/>
<path d="M108.8,231.6 L110.2,230.2 L111.6,228.9 L113.1,227.6 L114.5,226.3 L116.0,225.1 L117.4,223.8 L118.9,222.6 L120.4,221.4 L121.9,220.2 L123.4,219.1 L124.9,217.9 L126.4,216.8 L127.9,215.7 L129.4,214.6 L130.9,213.6 L132.5,212.5 L134.0,211.5 L135.6,210.5 L137.1,209.5 L138.7,208.5 L140.2,207.6 L141.8,206.6 L143.4,205.7 L144.9,204.8 L146.5,203.9 L148.1,203.0 L149.7,202.2 L151.3,201.4 L152.9,200.6 L154.5,199.8 L156.1,199.0 L157.7,198.2 L159.4,197.5 L161.0,196.8 L162.6,196.0 L164.3,195.4 L165.9,194.7 L167.5,194.0 L169.2,193.4 L170.9,192.8 L172.5,192.2 L174.2,191.6 L175.8,191.0 L177.5,190.5 L179.2,189.9 L180.9,189.4 L182.5,188.9 L184.2,188.4 L185.9,187.9 L187.6,187.5 L189.3,187.0 L191.0,186.6 L192.7,186.2 L194.4,185.8 L196.1,185.4 L197.8,185.1 L199.5,184.7 L201.2,184.4 L203.0,184.1 L204.7,183.8 L206.4,183.5 L208.1,183.3 L209.8,183.0 L211.6,182.8 L213.3,182.6 L215.0,182.4 L216.8,182.2 L218.5,182.0 L220.2,181.8 L222.0,181.7 L223.7,181.6 L225.5,181.5 L227.2,181.4 L228.9,181.3 L230.7,181.2 L232.4,181.2 L234.2,181.1 L235.9,181.1 L237.7,181.1 L239.4,181.1 L241.2,181.1 L242.9,181.1 L244.7,181.2 L246.4,181.3 L248.2,181.3 L249.9,181.4 L251.7,181.5 L253.4,181.6 L255.2,181.8 L257.0,181.9 L258.7,182.1 L260.5,182.2 L262.2,182.4 L264.0,182.6 L265.7,182.8 L267.5,183.1 L269.2,183.3 L271.0,183.6 L272.7,183.8 L274.5,184.1 L276.2,184.4 L278.0,184.7 L279.7,185.0 L281.4,185.3 L283.2,185.7 L284.9,186.0 L286.7,186.4 L288.4,186.8 L290.1,187.2 L291.9,187.6 L293.6,188.0 L295.3,188.4 L297.1,188.9 L298.8,189.3 L300.5,189.8 L302.2,190.2 L303.9,190.7 L305.7,191.2 L307.4,191.7 L309.1,192.3 L310.8,192.8 L312.5,193.4 L314.2,193.9 L315.9,194.5 L317.6,195.1 L319.3,195.7 L321.0,196.3 L322.7,196.9 L324.4,197.5 L326.0,198.1 L327.7,198.8 L329.4,199.4 L331.1,200.1 L332.7,200.8 L334.4,201.5 L336.0,202.2 L337.7,202.9 L339.3,203.6 L341.0,204.4 L342.6,205.1 L344.3,205.9 L345.9,206.6 L347.5,207.4 L349.1,208.2 L350.8,209.0 L352.4,209.8 L354.0,210.6 L355.6,211.4 L357.2,212.2 L358.8,213.1 L360.4,213.9 L362.0,214.8 L363.5,215.7 L365.1,216.6 L366.7,217.4 L368.2,218.3 L369.8,219.3 L371.3,220.2 L372.9,221.1 L374.4,222.0 L375.9,223.0 L377.5,223.9 L379.0,224.9 L380.5,225.9 L382.0,226.9 L383.5,227.8 L385.0,228.8 L386.5,229.8 L388.0,230.9 L389.4,231.9 L390.9,232.9 L392.4,234.0 L393.8,235.0 L395.3,236.1 L396.7,237.1 L398.1,238.2 L399.6,239.3 L401.0,240.4 L402.4,241.5 L403.8,242.6 L405.2,243.7 L406.6,244.8 L408.0,245.9 L409.4,247.1 L410.7,248.2 L412.1,249.4 L413.4,250.5 L414.8,251.7 L416.1,252.9 L417.5,254.0 L418.8,255.2 L420.1,256.4 L421.4,257.6 L422.8,258.9 L424.1,260.1 L425.4,261.3 L426.6,262.5 L427.9,263.8 L429.2,265.0 L430.5,266.3 L431.7,267.5 L433.0,268.8 L434.2,270.1 L435.4,271.4 L436.7,272.6 L437.9,273.9 L439.1,275.2 L440.3,276.6 L441.5,277.9 L442.7,279.2 L443.9,280.5 L445.1,281.9 L446.2,283.2 L447.4,284.5 L448.6,285.9 L449.7,287.3 L450.8,288.6 L452.0,290.0 L453.1,291.4 L454.2,292.8 L455.3,294.2 L456.4,295.6 L457.5,297.0 L458.6,298.4 L459.7,299.8 L460.8,301.2 L461.8,302.6 L462.9,304.1 L463.9,305.5 L465.0,306.9 L466.0,308.4 L467.0,309.9 L468.0,311.3 L469.1,312.8 L470.1,314.2 L471.1,315.7 L472.0,317.2 L473.0,318.7 L474.0,320.2 L474.9,321.7 L475.9,323.2 L476.8,324.7 L477.8,326.2 L478.7,327.7 L479.6,329.3 L480.5,330.8 L481.5,332.3 L482.3,333.9 L483.2,335.4 L484.1,336.9 L485.0,338.5 L485.9,340.0 L486.7,341.6 L487.6,343.2 L488.4,344.7 L489.2,346.3 L490.0,347.9 L490.9,349.5 L491.7,351.1 L492.5,352.7 L493.3,354.3 L494.0,355.9 L494.8,357.5 L495.6,359.1 L496.3,360.7 L497.1,362.3 L497.8,363.9 L498.5,365.5 L499.3,367.2 L500.0,368.8 L500.7,370.4 L501.4,372.1 L502.1,373.7 L502.7,375.4 L503.4,377.0 L504.1,378.7 L504.7,380.3 L505.4,382.0 L506.0,383.7 L506.6,385.3 L507.3,387.0 L507.9,388.7 L508.5,390.4 L509.1,392.0 L509.6,393.7 L510.2,395.4 L510.8,397.1" fill="none" stroke="#000018" stroke-width="0.8"/>
<path d="M510.8,397.1 L511.3,398.8 L511.9,400.5 L512.4,402.2 L512.9,403.9 L513.5,405.6 L514.0,407.3 L514.5,409.0 L515.0,410.7 L515.5,412.4 L515.9,414.1 L516.4,415.9 L516.8,417.6 L631.9,755.0" fill="none" stroke="#0000ff" stroke-width="2"/>
<path d="M1.1,401.5 L1.6,399.5 L2.1,397.4 L2.7,395.3 L3.2,393.3 L3.8,391.2 L4.3,389.1 L4.9,387.0 L5.5,384.9 L6.1,382.8 L6.7,380.7 L7.3,378.6 L8.0,376.4 L8.6,374.3 L9.3,372.2 L9.9,370.1 L10.6,367.9 L11.3,365.8 L12.0,363.7 L12.7,361.5 L13.4,359.4 L14.2,357.2 L14.9,355.1 L15.7,353.0 L16.5,350.8 L17.3,348.7 L18.1,346.6 L18.9,344.4 L19.7,342.3 L20.6,340.2 L21.4,338.1 L22.3,336.0 L23.2,333.8 L24.1,331.7 L25.0,329.6 L25.9,327.6 L26.9,325.5 L27.8,323.4 L28.8,321.3 L29.8,319.3 L30.8,317.2 L31.8,315.2 L32.9,313.1 L33.9,311.1 L35.0,309.1 L36.1,307.1 L37.2,305.1 L38.3,303.1 L39.5,301.1 L40.6,299.2 L41.8,297.2 L43.0,295.3 L44.2,293.4 L45.4,291.5 L46.7,289.6 L47.9,287.7 L49.2,285.9 L50.5,284.0 L51.8,282.2 L53.2,280.4 L54.5,278.6 L55.9,276.8 L57.3,275.1 L58.7,273.3 L60.1,271.6 L61.6,269.9 L63.0,268.3 L64.5,266.6 L66.0,265.0 L67.6,263.4 L69.1,261.8 L70.7,260.2 L72.3,258.7 L73.9,257.1 L75.6,255.6 L77.2,254.2 L78.9,252.7 L80.6,251.3 L82.3,249.9 L84.0,248.5 L85.8,247.2 L87.6,245.8 L89.4,244.5 L91.2,243.2 L93.0,242.0 L94.8,240.7 L96.7,239.5 L98.6,238.3 L100.5,237.2 L102.4,236.0 L104.3,234.9 L106.2,233.8 L108.2,232.8 L110.2,231.7 L112.1,230.7 L114.1,229.7 L116.1,228.7 L118.1,227.8 L120.2,226.8 L122.2,225.9 L124.3,225.1 L126.3,224.2 L128.4,223.4 L130.5,222.6 L132.6,221.8 L134.7,221.0 L136.8,220.3 L138.9,219.6 L141.1,218.9 L143.2,218.3 L145.3,217.6 L147.5,217.0 L149.6,216.4 L151.8,215.8 L154.0,215.3 L156.2,214.8 L158.3,214.3 L160.5,213.8 L162.7,213.4 L164.9,213.0 L167.1,212.6 L169.3,212.2 L171.5,211.8 L173.7,211.5 L175.9,211.2 L178.2,211.0 L180.4,210.7 L182.6,210.5 L184.8,210.3 L187.0,210.1 L189.2,209.9 L191.5,209.8 L193.7,209.7 L195.9,209.6 L198.1,209.6 L200.3,209.5 L202.5,209.5 L204.7,209.5 L206.9,209.6 L209.1,209.6 L211.3,209.7 L213.6,209.8 L215.8,210.0 L218.0,210.1 L220.1,210.3 L222.3,210.5 L224.5,210.7 L226.7,210.9 L228.9,211.2 L231.1,211.5 L233.3,211.8 L235.5,212.1 L237.6,212.5 L239.8,212.9 L242.0,213.3 L244.1,213.7 L246.3,214.1 L248.5,214.6 L250.6,215.1 L252.8,215.6 L254.9,216.1 L257.1,216.6 L259.2,217.2 L261.3,217.8 L263.5,218.4 L265.6,219.0 L267.7,219.6 L269.8,220.3 L271.9,221.0 L274.1,221.7 L276.2,222.4 L278.3,223.1 L280.4,223.9 L282.4,224.6 L284.5,225.4 L286.6,226.2 L288.7,227.1 L290.7,227.9 L292.8,228.8 L294.9,229.7 L296.9,230.6 L299.0,231.5 L301.0,232.4 L303.0,233.4 L305.1,234.3 L307.1,235.3 L309.1,236.3 L311.1,237.3 L313.1,238.4 L315.1,239.4 L317.1,240.5 L319.0,241.6 L321.0,242.7 L323.0,243.8 L324.9,244.9 L326.9,246.1 L328.8,247.3 L330.8,248.4 L332.7,249.6 L334.6,250.8 L336.5,252.1 L338.4,253.3 L340.3,254.6 L342.2,255.8 L344.1,257.1 L346.0,258.4 L347.8,259.7 L349.7,261.1 L351.5,262.4 L353.3,263.8 L355.2,265.1 L357.0,266.5 L358.8,267.9 L360.6,269.3 L362.4,270.7 L364.2,272.2 L365.9,273.6 L367.7,275.1 L369.4,276.5 L371.2,278.0 L372.9,279.5 L374.6,281.0 L376.3,282.5 L378.0,284.1 L379.7,285.6 L381.4,287.2 L383.1,288.7 L384.7,290.3 L386.4,291.9 L388.0,293.5 L389.6,295.1 L391.2,296.7 L392.9,298.3 L394.4,300.0 L396.0,301.6 L397.6,303.3 L399.1,305.0 L400.7,306.6 L402.2,308.3 L403.7,310.0 L405.3,311.7 L406.7,313.5 L408.2,315.2 L409.7,316.9 L411.2,318.7 L412.6,320.4 L414.0,322.2 L415.5,324.0 L416.9,325.7 L418.3,327.5 L419.6,329.3 L421.0,331.1 L422.4,332.9 L423.7,334.8 L425.0,336.6 L426.4,338.4 L427.7,340.3 L428.9,342.1 L430.2,344.0 L431.5,345.8 L432.7,347.7 L434.0,349.6 L435.2,351.4 L436.4,353.3 L437.6,355.2 L438.7,357.1 L439.9,359.0 L441.0,360.9 L442.2,362.8 L443.3,364.8 L444.4,366.7 L445.5,368.6 L446.5,370.6 L447.6,372.5 L448.6,374.4 L449.6,376.4 L450.6,378.4 L451.6,380.3 L452.6,382.3 L453.6,384.2 L454.5,386.2 L455.4,388.2 L456.3,390.2 L457.2,392.1 L458.1,394.1 L458.9,396.1 L459.8,398.1 L460.6,400.1 L461.4,402.1 L462.2,404.1 L463.0,406.1 L463.7,408.1 L464.5,410.1 L465.2,412.1 L465.9,414.1 L466.6,416.1 L467.2,418.2 L467.9,420.2 L468.5,422.2 L469.1,424.2 L580.8,755.0" fill="none" stroke="#06121a" stroke-width="1"/>
<path d="M470.5,425 L510.6,397.3" fill="none" stroke="#06121a" stroke-width="1"/>
<path d="M354.38,625.56 A19.1,24.6 -34.1 0 1 386.02,604.14 A19.1,24.6 -34.1 0 1 354.38,625.56 Z" fill="url(#gHole)" stroke="#06141c" stroke-width="1"/>
<path d="M113.51,427.38 L190.51,375.38 A108,86 55 0 1 322.77,416.37 A108,86 55 0 1 312.49,553.62 L235.49,605.62 A108,86 55 0 1 103.23,564.63 A108,86 55 0 1 113.51,427.38 Z" fill="url(#gBody)"/>
<path d="M181.78,382.37 A108,86 55 0 1 190.51,375.38 A108,86 55 0 1 322.77,416.37 A108,86 55 0 1 312.49,553.62" fill="none" stroke="#0000c8" stroke-width="1.3"/>
<path d="M181.78,382.37 A108,86 55 0 1 190.51,375.38 A108,86 55 0 1 322.77,416.37 A108,86 55 0 1 312.49,553.62" fill="none" stroke="#000020" stroke-width="0.7"/>
<path d="M112.55,428.03 A108,86 55 0 1 236.45,604.97 A108,86 55 0 1 112.55,428.03 Z" fill="url(#gRim)" stroke="#0000f0" stroke-width="1.4"/>
<path d="M113.15,443.30 A95.1,76.3 55 0 1 222.25,599.10 A95.1,76.3 55 0 1 113.15,443.30 Z" fill="#bccad3" stroke="#1a1a1a" stroke-width="1"/>
<path d="M176,414 L247,365" stroke="#ffffff" stroke-width="2"/>
<path d="M182,418.5 L257,366.6" stroke="#ffa500" stroke-width="1.6"/>
<g fill="none" stroke="#f7a41c" stroke-width="1" stroke-dasharray="1.3 0.8" opacity="0.85"><ellipse cx="209.0" cy="399.0" rx="2.4" ry="4.6" transform="rotate(-19.7 209.0 399.0)"/><ellipse cx="212.8" cy="396.4" rx="2.4" ry="4.6" transform="rotate(-19.7 212.8 396.4)"/><ellipse cx="216.7" cy="393.7" rx="2.4" ry="4.6" transform="rotate(-19.7 216.7 393.7)"/><ellipse cx="220.5" cy="391.1" rx="2.4" ry="4.6" transform="rotate(-19.7 220.5 391.1)"/><ellipse cx="224.3" cy="388.4" rx="2.4" ry="4.6" transform="rotate(-19.7 224.3 388.4)"/><ellipse cx="228.2" cy="385.8" rx="2.4" ry="4.6" transform="rotate(-19.7 228.2 385.8)"/><ellipse cx="232.0" cy="383.1" rx="2.4" ry="4.6" transform="rotate(-19.7 232.0 383.1)"/></g>
<path d="M252,361.6 L262.3,371.6 M262.3,361.6 L252,371.6" stroke="#ff2020" stroke-width="1.3"/>
<path d="M176.6,413.5 L186.6,423.5 M186.6,413.5 L176.6,423.5" stroke="#111" stroke-width="1.3"/>
<text x="268.3" y="371.8" font-family="Liberation Sans" font-size="15" fill="#e41e1e" textLength="62.7" lengthAdjust="spacing">AFPNT4</text>
<text x="193" y="423.7" font-family="Liberation Sans" font-size="15" fill="#141414" textLength="61.8" lengthAdjust="spacing">AFPNT1</text>
<g transform="translate(334.9,531.5)" fill="none" stroke="#000" stroke-width="2.6" stroke-linejoin="round" stroke-linecap="round">
<path d="M0,0 V5.5 M-8.8,5.5 H8.8"/>
<path d="M-8.6,5.5 L-13.6,20.5 Q-13.6,27 -8.6,27 Q-3.6,27 -3.6,20.5 Z M-13.6,21 H-3.6"/>
<path d="M8.6,5.5 L3.6,20.5 Q3.6,27 8.6,27 Q13.6,27 13.6,20.5 Z M3.6,21 H13.6"/>
</g>
<g transform="translate(334.9,565.5)" fill="none" stroke="#000" stroke-width="2.6" stroke-linejoin="round" stroke-linecap="round">
<path d="M0,0 V5.5 M-8.8,5.5 H8.8"/>
<path d="M-8.6,5.5 L-13.6,20.5 Q-13.6,27 -8.6,27 Q-3.6,27 -3.6,20.5 Z M-13.6,21 H-3.6"/>
<path d="M8.6,5.5 L3.6,20.5 Q3.6,27 8.6,27 Q13.6,27 13.6,20.5 Z M3.6,21 H13.6"/>
</g>
<g transform="translate(334.9,599.5)" fill="none" stroke="#000" stroke-width="2.6" stroke-linejoin="round" stroke-linecap="round">
<path d="M0,0 V5.5 M-8.8,5.5 H8.8"/>
<path d="M-8.6,5.5 L-13.6,20.5 Q-13.6,27 -8.6,27 Q-3.6,27 -3.6,20.5 Z M-13.6,21 H-3.6"/>
<path d="M8.6,5.5 L3.6,20.5 Q3.6,27 8.6,27 Q13.6,27 13.6,20.5 Z M3.6,21 H13.6"/>
</g>
<path d="M338,517 q3,3 6,4 M341,519 l-1,-4" stroke="#000" stroke-width="1.5" fill="none"/>
</svg>
<div class="b" style="left:0;top:0;width:993px;height:32px;background:#fff;border-bottom:1px solid #e6e6e6;box-sizing:border-box"></div>
<div class="b" style="left:164.5px;top:0;width:1px;height:30px;background:#cfcfcf"></div>
<div class="b" style="left:346.5px;top:0;width:1px;height:30px;background:#cfcfcf"></div>
<div class="b" style="left:553.0px;top:0;width:1px;height:30px;background:#cfcfcf"></div>
<div class="b" style="left:616.0px;top:0;width:1px;height:30px;background:#cfcfcf"></div>
<div class="t" style="left:31.0px;top:10.18px;font-size:15.5px;line-height:15.5px;color:#383838;transform:scaleX(0.9257);">Constraints</div>
<div class="b" style="left:108px;top:14px;width:0;height:0;border-left:4px solid transparent;border-right:4px solid transparent;border-top:5px solid #6a6a6a"></div>
<div class="t" style="left:227.7px;top:10.18px;font-size:15.5px;line-height:15.5px;color:#383838;transform:scaleX(0.9582);">Materials</div>
<div class="t" style="left:439.7px;top:10.18px;font-size:15.5px;line-height:15.5px;color:#383838;transform:scaleX(0.8340);">Run</div>
<div class="b" style="left:273px;top:40px;width:290px;height:42.5px;background:#fff"></div>
<svg class="b" style="left:273px;top:40px" width="290" height="43" viewBox="273 40 290 43">
<defs>
<radialGradient id="lens" cx="0.4" cy="0.35" r="0.7"><stop offset="0" stop-color="#ffffff"/><stop offset="1" stop-color="#bfe6f5"/></radialGradient>
<linearGradient id="gauge" x1="0" y1="0" x2="1" y2="1"><stop offset="0" stop-color="#b9e6f7"/><stop offset="0.5" stop-color="#8cc9e2"/><stop offset="1" stop-color="#5eaacb"/></linearGradient>
<radialGradient id="ball" cx="0.35" cy="0.3" r="0.8"><stop offset="0" stop-color="#ffffff"/><stop offset="0.6" stop-color="#c8c8c8"/><stop offset="1" stop-color="#8a8a8a"/></radialGradient>
<linearGradient id="cubeg" x1="0" y1="0" x2="1" y2="0"><stop offset="0" stop-color="#f4f4f4"/><stop offset="1" stop-color="#b0b0b0"/></linearGradient>
</defs>
<!-- zoom fit -->
<rect x="282.5" y="49.7" width="21.5" height="21.5" fill="#fafafa" stroke="#b8b8b8" stroke-width="1.2"/>
<line x1="298" y1="65" x2="305" y2="72" stroke="#9a9a9a" stroke-width="3.6" stroke-linecap="round"/>
<line x1="298" y1="65" x2="305" y2="72" stroke="#f0f0f0" stroke-width="1.6" stroke-linecap="round"/>
<circle cx="293.3" cy="60.2" r="7.2" fill="url(#lens)" stroke="#5ca9c8" stroke-width="1.3"/>
<!-- zoom in -->
<line x1="333" y1="63" x2="341.5" y2="71.5" stroke="#9a9a9a" stroke-width="3.8" stroke-linecap="round"/>
<line x1="333" y1="63" x2="341.5" y2="71.5" stroke="#f2f2f2" stroke-width="1.8" stroke-linecap="round"/>
<circle cx="327.8" cy="57.8" r="8.3" fill="url(#lens)" stroke="#2f86ab" stroke-width="1.4"/>
<path d="M322.8,57.8 H332.8 M327.8,52.8 V62.8" stroke="#0c5f86" stroke-width="2.6"/>
<!-- zoom out -->
<line x1="370" y1="63" x2="378.5" y2="71.5" stroke="#9a9a9a" stroke-width="3.8" stroke-linecap="round"/>
<line x1="370" y1="63" x2="378.5" y2="71.5" stroke="#f2f2f2" stroke-width="1.8" stroke-linecap="round"/>
<circle cx="364.9" cy="57.8" r="8.3" fill="url(#lens)" stroke="#2f86ab" stroke-width="1.4"/>
<path d="M359.9,57.8 H369.9" stroke="#0c5f86" stroke-width="2.6"/>
<!-- gauge -->
<rect x="393.5" y="49.6" width="24" height="23.9" fill="url(#gauge)"/>
<path d="M393.5,73.5 V49.6 H417.5 V73.5" fill="none" stroke="#b4b4b4" stroke-width="1"/>
<rect x="393.5" y="49.2" width="24" height="1.8" fill="#a8a8a8"/>
<path d="M394,56.5 Q404,53 413.8,58 L399.5,72.8 H394 Z" fill="#ffffff"/>
<path d="M399.5,71 L413.8,58" stroke="#1b6e92" stroke-width="1.5"/>
<path d="M397.5,73.3 Q398,69.2 401.5,69.2 Q403.5,71 403.5,73.3 Z" fill="#15607f"/>
<!-- shaded sphere+cube -->
<path d="M437,57.5 L443.5,52.5 H455 V65 L449,70 H437 Z" fill="url(#cubeg)"/>
<path d="M443.5,52.5 L455,49 V65 L449,70 Z" fill="#c4c4c4"/>
<path d="M437,57.5 L443.5,52.5 H449.5 L449.5,58 Z" fill="#fafafa"/>
<circle cx="437.6" cy="65.8" r="8" fill="url(#ball)"/>
<path d="M454.5,76.5 L458,76.5 L458,73 Z" fill="#333"/>
<!-- cube -->
<path d="M468.3,55.7 H486.5 V73.1 H468.3 Z" fill="#fff" stroke="#17668e" stroke-width="1.8"/>
<path d="M468.3,55.7 L474.7,49.1 H492.8 L486.5,55.7 Z" fill="#c9ecf8" stroke="#17668e" stroke-width="1.6" stroke-linejoin="round"/>
<path d="M486.5,55.7 L492.8,49.1 V66.8 L486.5,73.1 Z" fill="#72b9d6" stroke="#17668e" stroke-width="1.6" stroke-linejoin="round"/>
<path d="M492.5,76.3 L497,76.3 L497,72 Z" fill="#333"/>
<!-- cube with palette -->
<path d="M506.4,59.5 L511.4,49.5 H525.5 L530.4,59.5 L525.5,69.5 H511.4 Z" fill="#d4f0fb" stroke="#62b6d9" stroke-width="1.3" stroke-linejoin="round"/>
<path d="M506.4,59.5 H522.5 L525.5,49.5 M522.5,59.5 L525.5,69.5" fill="none" stroke="#62b6d9" stroke-width="1.1"/>
<path d="M522.5,59.5 L525.5,49.5 L530.4,59.5 Z" fill="#62abcf"/>
<path d="M506.4,59.5 H530.4 L525.5,69.5 H511.4 Z" fill="#c2e9f8" stroke="#62b6d9" stroke-width="1.1" stroke-linejoin="round"/>
<rect x="521.4" y="63.1" width="9.5" height="10" fill="#f2f2f2" stroke="#8c8c8c" stroke-width="0.9"/>
<path d="M523.2,65.8 h2 M526.5,65.8 h2.5 M523.2,68.2 h2 M526.5,68.2 h2.5 M523.2,70.6 h2 M526.5,70.6 h2.5" stroke="#777" stroke-width="0.8"/>
<path d="M531,76.3 L535,76.3 L535,72 Z" fill="#333"/>
<rect x="544.2" y="49.5" width="6" height="23.5" fill="#f6f6f6" stroke="#b0b0b0" stroke-width="1"/>
<path d="M545,54.5 h2 M545,59.5 h2 M545,64.5 h2 M545,69.5 h2" stroke="#999" stroke-width="0.8"/>
<rect x="544.7" y="70.5" width="2.5" height="2" fill="#7ab8d8"/>
</svg>
<div class="b" style="left:547px;top:9px;width:405px;height:567px;background:#eeeff1;box-shadow:0 0 12px 2px rgba(0,0,0,0.28);outline:1px solid #f8f8f9;outline-offset:-1px"></div>
<div class="b" style="left:548px;top:10px;width:403px;height:36px;background:#e6e7e9"></div>
<div class="t" style="left:693.6px;top:22.08px;font-size:15.5px;line-height:15.5px;color:#9ca0a6;transform:scaleX(0.9827);">Spring Definition</div>
<svg class="b" style="left:925px;top:20px" width="16" height="16" viewBox="0 0 16 16"><path d="M3.5,3.5 L12.5,12.5 M12.5,3.5 L3.5,12.5" stroke="#a3a3a3" stroke-width="2.8"/></svg>
<div class="b" style="left:554px;top:56px;width:391px;height:49px;border:1px solid #cdcdcd;box-sizing:border-box"></div>
<div class="b" style="left:568.7px;top:55px;width:47px;height:3px;background:#eeeff1"></div>
<div class="t" style="left:572.7px;top:50.48px;font-size:15.5px;line-height:15.5px;color:#1e1e1e;transform:scaleX(0.9435);">Name</div>
<div class="b" style="left:562px;top:69px;width:331px;height:27.5px;background:#fff;border:1px solid #a9a9a9;box-sizing:border-box"></div>
<div class="t" style="left:566.3px;top:76.48px;font-size:15.5px;line-height:15.5px;color:#2b2b2b;transform:scaleX(0.9453);">Spring1</div>
<div class="b" style="left:898px;top:69px;width:39px;height:25px;background:#f7f7f8;border:1px solid #acacac;box-sizing:border-box"></div>
<svg class="b" style="left:909px;top:73px" width="18" height="17" viewBox="909 73 18 17"><path d="M910.3,75.6 Q911.5,73.6 915.5,73.9 L920.5,74.6 Q924.8,75.8 924.6,78.3 Q924.3,80.6 921.2,81.3 Q919.6,81.9 921.3,82.8 L924,84.2 Q925.8,87.3 922.3,88.8 L916.2,89.1 Q911.8,88.7 910.3,86.6 Q909.6,83.9 912.2,82.4 L915.8,80.6 Q916.8,80 914.8,79.6 L911.6,79.2 Q909.4,77.8 910.3,75.6 Z" fill="#ffa600"/></svg>
<div class="b" style="left:554px;top:116px;width:391px;height:48.599999999999994px;border:1px solid #cdcdcd;box-sizing:border-box"></div>
<div class="b" style="left:568.5px;top:115px;width:38.5px;height:3px;background:#eeeff1"></div>
<div class="t" style="left:572.5px;top:110.28px;font-size:15.5px;line-height:15.5px;color:#1e1e1e;transform:scaleX(0.9082);">Type</div>
<div class="b" style="left:562px;top:129px;width:374.6px;height:27.5px;background:#f7f7f8;border:1px solid #ababab;box-sizing:border-box"></div>
<div class="b" style="left:917.2px;top:129px;width:1px;height:27.5px;background:#b4b4b4"></div>
<div class="b" style="left:922.9px;top:140.6px;width:0;height:0;border-left:4.5px solid transparent;border-right:4.5px solid transparent;border-top:5px solid #666"></div>
<div class="t" style="left:571.4px;top:136.18px;font-size:15.5px;line-height:15.5px;color:#2b2b2b;transform:scaleX(0.9171);">Simple</div>
<div class="b" style="left:554px;top:176px;width:391px;height:150.60000000000002px;border:1px solid #cdcdcd;box-sizing:border-box"></div>
<div class="b" style="left:568.5px;top:175px;width:79.2px;height:3px;background:#eeeff1"></div>
<div class="t" style="left:572.5px;top:170.38px;font-size:15.5px;line-height:15.5px;color:#1e1e1e;transform:scaleX(0.8983);">References</div>
<div class="b" style="left:562px;top:189px;width:374.6px;height:27.5px;background:#f7f7f8;border:1px solid #ababab;box-sizing:border-box"></div>
<div class="b" style="left:917.2px;top:189px;width:1px;height:27.5px;background:#b4b4b4"></div>
<div class="b" style="left:922.9px;top:200.6px;width:0;height:0;border-left:4.5px solid transparent;border-right:4.5px solid transparent;border-top:5px solid #666"></div>
<div class="t" style="left:571.4px;top:196.28px;font-size:15.5px;line-height:15.5px;color:#2b2b2b;transform:scaleX(0.9427);">Point-Point</div>
<div class="t" style="left:562.7px;top:223.98px;font-size:15.5px;line-height:15.5px;color:#3a3a3a;transform:scaleX(0.9222);">Point :</div>
<div class="b" style="left:605.9px;top:222.9px;width:15px;height:15px;border-radius:50%;background:#fff;border:1.5px solid #5a5a5a;box-sizing:border-box"></div>
<div class="b" style="left:609.6999999999999px;top:226.70000000000002px;width:7.4px;height:7.4px;border-radius:50%;background:#333"></div>
<div class="t" style="left:629.5px;top:223.98px;font-size:15.5px;line-height:15.5px;color:#3a3a3a;transform:scaleX(0.9283);">Single</div>
<div class="b" style="left:678.8px;top:222.9px;width:15px;height:15px;border-radius:50%;background:#fff;border:1.5px solid #5a5a5a;box-sizing:border-box"></div>
<div class="t" style="left:702.4px;top:223.98px;font-size:15.5px;line-height:15.5px;color:#3a3a3a;transform:scaleX(0.9266);">Feature</div>
<div class="b" style="left:759.7px;top:222.9px;width:15px;height:15px;border-radius:50%;background:#fff;border:1.5px solid #5a5a5a;box-sizing:border-box"></div>
<div class="t" style="left:783.2px;top:223.98px;font-size:15.5px;line-height:15.5px;color:#3a3a3a;transform:scaleX(0.9298);">Pattern</div>
<div class="b" style="left:837.7px;top:222.9px;width:15px;height:15px;border-radius:50%;background:#fff;border:1.5px solid #5a5a5a;box-sizing:border-box"></div>
<div class="t" style="left:861.4px;top:223.98px;font-size:15.5px;line-height:15.5px;color:#3a3a3a;transform:scaleX(0.9350);">Lattice Set</div>
<div class="b" style="left:562px;top:243px;width:374.6px;height:25.600000000000023px;background:#eefbe6;border:1px solid #b2b2b2;box-sizing:border-box"></div>
<div class="t" style="left:584.8px;top:249.18px;font-size:15.5px;line-height:15.5px;color:#2a2a2a;transform:scaleX(0.8748);">Point "AFPNT4" : TROLLEY_ANALAYSIS_MODEL1.ASM</div>
<div class="t" style="left:562.7px;top:273.98px;font-size:15.5px;line-height:15.5px;color:#3a3a3a;transform:scaleX(0.9222);">Point :</div>
<div class="b" style="left:605.9px;top:272.9px;width:15px;height:15px;border-radius:50%;background:#fff;border:1.5px solid #5a5a5a;box-sizing:border-box"></div>
<div class="b" style="left:609.6999999999999px;top:276.7px;width:7.4px;height:7.4px;border-radius:50%;background:#333"></div>
<div class="t" style="left:629.5px;top:273.98px;font-size:15.5px;line-height:15.5px;color:#3a3a3a;transform:scaleX(0.9283);">Single</div>
<div class="b" style="left:678.8px;top:272.9px;width:15px;height:15px;border-radius:50%;background:#fff;border:1.5px solid #5a5a5a;box-sizing:border-box"></div>
<div class="t" style="left:702.4px;top:273.98px;font-size:15.5px;line-height:15.5px;color:#3a3a3a;transform:scaleX(0.9266);">Feature</div>
<div class="b" style="left:759.7px;top:272.9px;width:15px;height:15px;border-radius:50%;background:#fff;border:1.5px solid #5a5a5a;box-sizing:border-box"></div>
<div class="t" style="left:783.2px;top:273.98px;font-size:15.5px;line-height:15.5px;color:#3a3a3a;transform:scaleX(0.9298);">Pattern</div>
<div class="b" style="left:837.7px;top:272.9px;width:15px;height:15px;border-radius:50%;background:#fff;border:1.5px solid #5a5a5a;box-sizing:border-box"></div>
<div class="t" style="left:861.4px;top:273.98px;font-size:15.5px;line-height:15.5px;color:#3a3a3a;transform:scaleX(0.9350);">Lattice Set</div>
<div class="b" style="left:562px;top:293px;width:374.6px;height:25.80000000000001px;background:#f3f1fc;border:1px solid #b2b2b2;box-sizing:border-box"></div>
<div class="t" style="left:584.8px;top:298.78px;font-size:15.5px;line-height:15.5px;color:#2a2a2a;transform:scaleX(0.8748);">Point "AFPNT1" : TROLLEY_ANALAYSIS_MODEL1.ASM</div>
<div class="b" style="left:554px;top:338px;width:391px;height:169.39999999999998px;border:1px solid #cdcdcd;box-sizing:border-box"></div>
<div class="b" style="left:568.2px;top:337px;width:75px;height:3px;background:#eeeff1"></div>
<div class="t" style="left:572.2px;top:332.08px;font-size:15.5px;line-height:15.5px;color:#1e1e1e;transform:scaleX(0.9479);">Properties</div>
<div class="t" style="left:563.1px;top:355.78px;font-size:15.5px;line-height:15.5px;color:#3a3a3a;transform:scaleX(0.9578);">Extensional Force-Deflection Variation</div>
<div class="b" style="left:562px;top:373px;width:374.6px;height:27.30000000000001px;background:#f7f7f8;border:1px solid #ababab;box-sizing:border-box"></div>
<div class="b" style="left:917.2px;top:373px;width:1px;height:27.30000000000001px;background:#b4b4b4"></div>
<div class="b" style="left:922.9px;top:384.4px;width:0;height:0;border-left:4.5px solid transparent;border-right:4.5px solid transparent;border-top:5px solid #666"></div>
<div class="t" style="left:571.8px;top:379.58px;font-size:15.5px;line-height:15.5px;color:#2b2b2b;transform:scaleX(0.9399);">Constant Stiffness</div>
<div class="t" style="left:563.1px;top:406.98px;font-size:15.5px;line-height:15.5px;color:#3a3a3a;transform:scaleX(0.9211);">Extensional Stiffness</div>
<div class="b" style="left:562px;top:424px;width:254px;height:27.5px;background:#fff;border:1px solid #a9a9a9;box-sizing:border-box"></div>
<div class="t" style="left:567.1px;top:430.78px;font-size:15.5px;line-height:15.5px;color:#2b2b2b;transform:scaleX(0.8982);">1000</div>
<div class="b" style="left:821px;top:424px;width:115.60000000000002px;height:27.399999999999977px;background:#f7f7f8;border:1px solid #ababab;box-sizing:border-box"></div>
<div class="b" style="left:917.2px;top:424px;width:1px;height:27.399999999999977px;background:#b4b4b4"></div>
<div class="b" style="left:922.9px;top:435.5px;width:0;height:0;border-left:4.5px solid transparent;border-right:4.5px solid transparent;border-top:5px solid #666"></div>
<div class="t" style="left:830.4px;top:431.18px;font-size:15.5px;line-height:15.5px;color:#2b2b2b;transform:scaleX(0.9417);">N / mm</div>
<div class="t" style="left:563.1px;top:454.98px;font-size:15.5px;line-height:15.5px;color:#3a3a3a;transform:scaleX(0.9351);">Torsional Stiffness</div>
<div class="b" style="left:562px;top:472px;width:176px;height:27.399999999999977px;background:#fff;border:1px solid #a9a9a9;box-sizing:border-box"></div>
<div class="t" style="left:566.1px;top:479.08px;font-size:15.5px;line-height:15.5px;color:#2b2b2b;transform:scaleX(0.9328);">0</div>
<div class="b" style="left:743px;top:472px;width:193.60000000000002px;height:27.19999999999999px;background:#f7f7f8;border:1px solid #ababab;box-sizing:border-box"></div>
<div class="b" style="left:917.2px;top:472px;width:1px;height:27.19999999999999px;background:#b4b4b4"></div>
<div class="b" style="left:922.9px;top:483.4px;width:0;height:0;border-left:4.5px solid transparent;border-right:4.5px solid transparent;border-top:5px solid #666"></div>
<div class="t" style="left:752.6px;top:479.08px;font-size:15.5px;line-height:15.5px;color:#2b2b2b;transform:scaleX(0.9960);">mm^2 kg / (sec^2 rad)</div>
<div class="b" style="left:551px;top:520px;width:397px;height:1px;background:#cdcdcd"></div>
<div class="b" style="left:792px;top:533px;width:68px;height:30px;background:#a6e0fb;border:1px solid #73c6ef;box-sizing:border-box"></div>
<div class="t" style="left:815.8px;top:541.48px;font-size:15.5px;line-height:15.5px;color:#2a2a2a;transform:scaleX(0.9365);">OK</div>
<div class="b" style="left:870px;top:533px;width:68px;height:30px;background:#f8f8f8;border:1px solid #adadad;box-sizing:border-box"></div>
<div class="t" style="left:882.4px;top:541.48px;font-size:15.5px;line-height:15.5px;color:#2a2a2a;transform:scaleX(0.9325);">Cancel</div>

</body></html>
